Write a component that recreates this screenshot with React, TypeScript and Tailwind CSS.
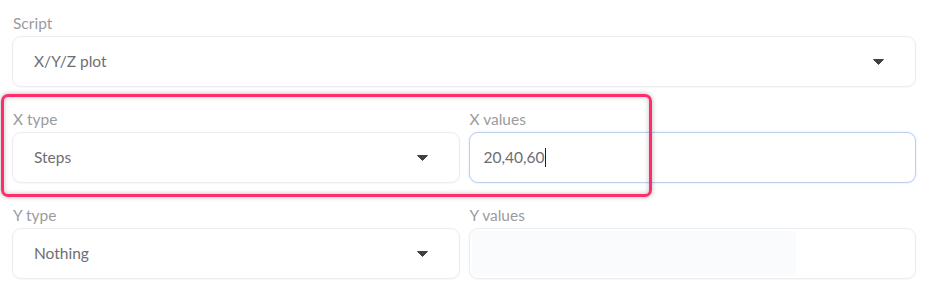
import React from 'react';

const font = { fontFamily: 'Lato, "Noto Sans", sans-serif' };

function Caret() {
  return (
    <svg width="11" height="6" viewBox="0 0 11 6" className="shrink-0">
      <path d="M0.5 0.5 L10.5 0.5 L5.5 5.5 Z" fill="#3f3f46" stroke="#3f3f46" strokeLinejoin="round" />
    </svg>
  );
}

function Label({ children }: { children: React.ReactNode }) {
  return <div className="h-5 leading-5 text-[15.5px] text-[#9b9b9f] mb-[3px] pl-px">{children}</div>;
}

function Select({ label, value }: { label: string; value: string }) {
  return (
    <div className="flex-1 min-w-0">
      <Label>{label}</Label>
      <div className="h-[51px] rounded-[9px] border border-[#ececf0] bg-white flex items-center pl-[21px] pr-[31px] shadow-[0_1px_2px_rgba(0,0,0,0.04)]">
        <span className="flex-1 text-[15.5px] text-[#6e6e73]">{value}</span>
        <Caret />
      </div>
    </div>
  );
}

export default function App() {
  return (
    <div className="relative w-[934px] h-[299px] bg-white overflow-hidden" style={font}>
      <div className="pl-3 pr-[18px] pt-[13px] flex flex-col gap-[22px]">
        <div className="flex">
          <Select label="Script" value="X/Y/Z plot" />
        </div>
        <div className="flex gap-[9px]">
          <Select label="X type" value="Steps" />
          <div className="flex-1 min-w-0">
            <Label>X values</Label>
            <div className="h-[51px] rounded-[9px] border border-[#bcd0ee] bg-white flex items-center pl-[14px] shadow-[0_0_2px_rgba(120,160,230,0.35)]">
              <span className="text-[15.5px] text-[#6e6e73]">20,40,60</span>
              <span className="w-px h-[19px] bg-[#222] ml-px" />
            </div>
          </div>
        </div>
        <div className="flex gap-[9px]">
          <Select label="Y type" value="Nothing" />
          <div className="flex-1 min-w-0">
            <Label>Y values</Label>
            <div className="h-[51px] rounded-[9px] border border-[#ececf0] bg-white overflow-hidden p-[2px] shadow-[0_1px_2px_rgba(0,0,0,0.04)]">
              <div className="h-full w-[324px] bg-[#fafbfc]" />
            </div>
          </div>
        </div>
      </div>
      <div className="absolute left-px top-[94px] w-[651px] h-[103px] rounded-[7px] border-[3px] border-[#ff2d6c] shadow-[0_0_5px_rgba(0,0,0,0.3),inset_0_0_5px_rgba(0,0,0,0.25)] pointer-events-none" />
    </div>
  );
}
